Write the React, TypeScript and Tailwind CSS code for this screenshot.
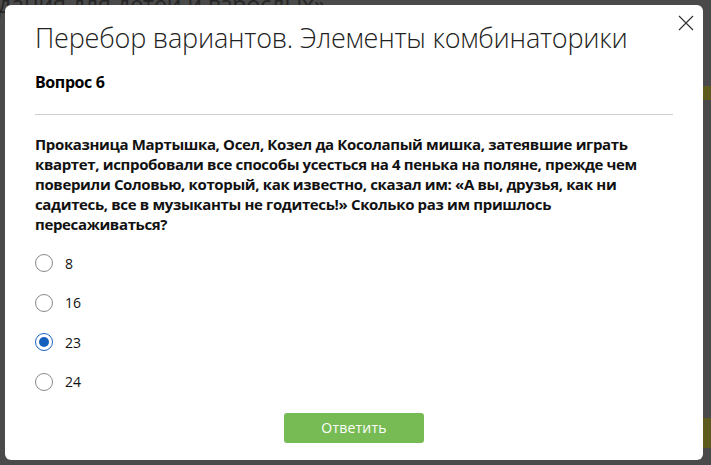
import { useState } from 'react';

const options = ['8', '16', '23', '24'];

const App = () => {
  const [answer, setAnswer] = useState('23');

  return (
    <div className="relative w-[711px] h-[465px] overflow-hidden bg-[#4a4a4a] font-['Open_Sans',sans-serif]">
      {/* page behind the overlay */}
      <div className="absolute -left-[2px] -top-[13px] text-[23px] text-[#262626] whitespace-nowrap">
        дания для детей и взрослых»
      </div>
      <div className="absolute right-0 top-[86px] w-[8px] h-[14px] bg-[#5f5a1e]" />
      <div className="absolute right-0 top-[418px] w-[8px] h-[30px] bg-[#5f5a1e]" />

      {/* modal */}
      <div className="absolute left-[5px] top-[5px] w-[698px] h-[455px] bg-white rounded-[6px] px-[30px]">
        <button className="absolute right-[8px] top-[9px] w-[18px] h-[18px] text-[#333]">
          <svg viewBox="0 0 18 18" className="w-[18px] h-[18px]" fill="none" stroke="currentColor" strokeWidth="1.2">
            <path d="M2 2 L16 16 M16 2 L2 16" />
          </svg>
        </button>

        <h1 className="pt-[15px] text-[27px] leading-[36px] font-light text-[#222] tracking-[-0.2px] whitespace-nowrap">
          Перебор вариантов. Элементы комбинаторики
        </h1>
        <h2 className="mt-[15px] text-[16px] leading-[22px] font-bold text-black tracking-[-0.4px]">Вопрос 6</h2>
        <div className="mt-[21px] border-t border-[#cfcfcf]" />

        <p className="mt-[19px] pr-[30px] text-[15px] leading-[20px] font-bold text-[#111] tracking-[-0.35px]">
          Проказница Мартышка, Осел, Козел да Косолапый мишка, затеявшие играть квартет, испробовали все способы
          усесться на 4 пенька на поляне, прежде чем поверили Соловью, который, как известно, сказал им: «А вы, друзья,
          как ни садитесь, все в музыканты не годитесь!» Сколько раз им пришлось пересаживаться?
        </p>

        <div className="mt-[20px] flex flex-col gap-[21.5px]">
          {options.map((o) => (
            <label key={o} className="flex items-center gap-[12px] cursor-pointer h-[18px]">
              <span
                onClick={() => setAnswer(o)}
                className={`w-[18px] h-[18px] rounded-full border flex items-center justify-center ${
                  answer === o ? 'border-[#1565c0]' : 'border-[#8a8a8a]'
                }`}
              >
                {answer === o && <span className="w-[10px] h-[10px] rounded-full bg-[#1560bd]" />}
              </span>
              <span className="text-[14px] text-[#111]">{o}</span>
            </label>
          ))}
        </div>

        <div className="mt-[22px] flex justify-center">
          <button className="w-[140px] h-[30px] rounded-[3px] bg-[#77bb55] text-white text-[14px] tracking-[0.2px]">
            Ответить
          </button>
        </div>
      </div>
    </div>
  );
};

export default App;
